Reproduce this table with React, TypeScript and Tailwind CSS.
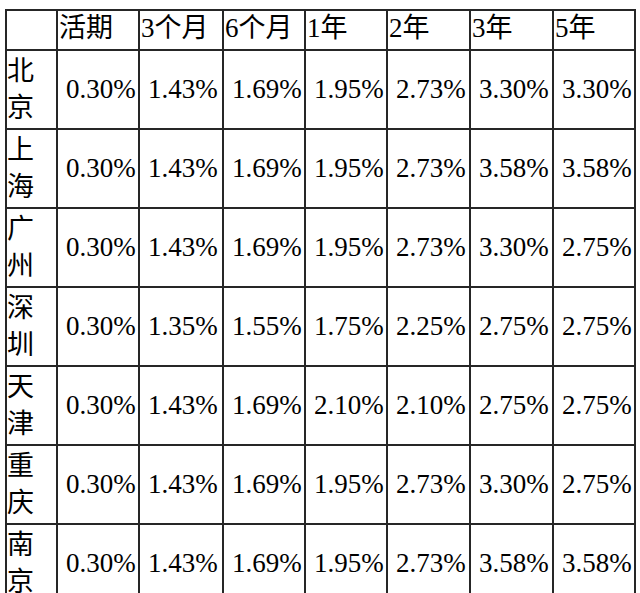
import { Fragment } from 'react'

const headers = ['活期', '3个月', '6个月', '1年', '2年', '3年', '5年']

const rows: { city: string; rates: string[] }[] = [
  { city: '北京', rates: ['0.30%', '1.43%', '1.69%', '1.95%', '2.73%', '3.30%', '3.30%'] },
  { city: '上海', rates: ['0.30%', '1.43%', '1.69%', '1.95%', '2.73%', '3.58%', '3.58%'] },
  { city: '广州', rates: ['0.30%', '1.43%', '1.69%', '1.95%', '2.73%', '3.30%', '2.75%'] },
  { city: '深圳', rates: ['0.30%', '1.35%', '1.55%', '1.75%', '2.25%', '2.75%', '2.75%'] },
  { city: '天津', rates: ['0.30%', '1.43%', '1.69%', '2.10%', '2.10%', '2.75%', '2.75%'] },
  { city: '重庆', rates: ['0.30%', '1.43%', '1.69%', '1.95%', '2.73%', '3.30%', '2.75%'] },
  { city: '南京', rates: ['0.30%', '1.43%', '1.69%', '1.95%', '2.73%', '3.58%', '3.58%'] },
]

export default function App() {
  return (
    <div className="w-[640px] h-[593px] overflow-hidden bg-white pt-[9px] pl-[5px] font-['Liberation_Serif','Noto_Sans_CJK_SC',serif] text-[27px] text-black">
      <div className="inline-grid grid-cols-[49px_80px_82px_80px_80px_81px_81px_80px] grid-rows-[38px_repeat(7,77px)] gap-[2px] p-[2px] bg-[#262626]">
        <div className="bg-white" />
        {headers.map((h) => (
          <div key={h} className="bg-white flex items-center pl-px pb-[3px] leading-none whitespace-nowrap">
            {h}
          </div>
        ))}

        {rows.map((r) => (
          <Fragment key={r.city}>
            <div className="bg-white flex items-center leading-[37px] break-all">
              <span className="block w-[28px]">{r.city}</span>
            </div>
            {r.rates.map((v, i) => (
              <div key={i} className="bg-white flex items-center pl-[8px] whitespace-nowrap leading-none">
                {v}
              </div>
            ))}
          </Fragment>
        ))}
      </div>
    </div>
  )
}
